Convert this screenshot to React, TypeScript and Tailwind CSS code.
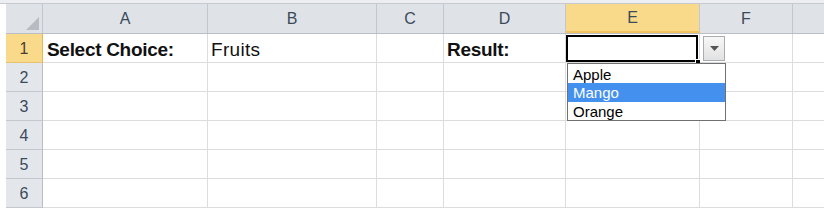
import React from 'react';

const font = { fontFamily: '"Liberation Sans", Arial, sans-serif' };

const widths = ['w-[37px]', 'w-[165px]', 'w-[169px]', 'w-[67px]', 'w-[122px]', 'w-[134px]', 'w-[93px]'];
const letters = ['A', 'B', 'C', 'D', 'E', 'F'];

const HeaderRow: React.FC = () => (
    <div className="flex h-[30px] bg-[#dfe3e8] border-b border-[#b9bec5]">
        <div className={`${widths[0]} shrink-0 relative border-r border-[#c3c8ce]`}>
            <svg className="absolute right-[3px] bottom-[3px]" width="13" height="13" viewBox="0 0 13 13">
                <polygon points="13,0 13,13 0,13" fill="#b7bcc3" />
            </svg>
        </div>
        {letters.map((l, i) => (
            <div
                key={l}
                className={`${widths[i + 1]} shrink-0 flex items-center justify-center border-r border-[#c3c8ce] text-[16px] text-[#3b4a5a] pt-[1px] ${
                    l === 'E' ? 'bg-[#f9d98a] border-b-2 border-b-[#f2c45f]' : ''
                }`}
            >
                {l}
            </div>
        ))}
        <div className="flex-1" />
    </div>
);

const Row: React.FC<{ n: number; children?: React.ReactNode }> = ({ n, children }) => (
    <div className="flex h-[29px]">
        <div
            className={`${widths[0]} shrink-0 flex items-center justify-center border-r border-b text-[16px] pt-[2px] ${
                n === 1
                    ? 'bg-[#f9d98a] border-b-[#e8c470] border-r-[#e3b851] text-[#4a4030]'
                    : 'bg-[#e3e7ec] border-b-[#c3c8ce] border-r-[#b9bec5] text-[#3b4a5a]'
            }`}
        >
            {n}
        </div>
        {children ??
            letters.map((l, i) => (
                <div key={l} className={`${widths[i + 1]} shrink-0 border-r border-b border-[#dadcdd]`} />
            ))}
        <div className="flex-1 border-b border-[#dadcdd]" />
    </div>
);

const cell = 'shrink-0 border-r border-b border-[#dadcdd] flex items-center text-[19px] text-[#111]';

export default function App() {
    return (
        <div className="w-[824px] h-[214px] bg-white overflow-hidden" style={font}>
            <div className="h-[4px] bg-[#eceef1] border-b border-[#c6cad0]" />
            <div className="pl-[6px]">
                <HeaderRow />
                <Row n={1}>
                    <div className={`${widths[1]} ${cell} pl-[4px] pt-[5px] font-bold tracking-[-0.3px]`}>Select Choice:</div>
                    <div className={`${widths[2]} ${cell} pl-[3px] pt-[5px] tracking-[0.3px]`}>Fruits</div>
                    <div className={`${widths[3]} ${cell}`} />
                    <div className={`${widths[4]} ${cell} pl-[3px] pt-[5px] font-bold tracking-[-0.3px]`}>Result:</div>
                    <div className={`${widths[5]} ${cell} relative`}>
                        <div className="absolute left-0 top-[1px] right-[1px] bottom-0 border-2 border-black" />
                        <div className="absolute right-[-2px] bottom-[-3px] w-[6px] h-[6px] bg-black border border-white" />
                        <div className="absolute left-[1px] top-[29px] w-[159px] h-[58px] bg-white border border-[#707070] z-10 flex flex-col text-[15px] leading-[18px]">
                            <div className="h-[19px] pl-[5px] pt-[2px] text-black">Apple</div>
                            <div className="h-[19px] pl-[5px] pt-[1px] bg-[#4390ee] text-white">Mango</div>
                            <div className="h-[18px] pl-[5px] pt-[1px] text-black">Orange</div>
                        </div>
                    </div>
                    <div className={`${widths[6]} ${cell} relative`}>
                        <div className="absolute left-[3px] top-[2px] w-[22px] h-[25px] bg-gradient-to-b from-[#f7f7f7] to-[#e2e2e2] border border-[#a9adb2] flex items-center justify-center">
                            <svg width="9" height="5" viewBox="0 0 9 5">
                                <polygon points="0,0 9,0 4.5,5" fill="#555" />
                            </svg>
                        </div>
                    </div>
                </Row>
                {[2, 3, 4, 5, 6].map((n) => (
                    <Row key={n} n={n} />
                ))}
            </div>
        </div>
    );
}
